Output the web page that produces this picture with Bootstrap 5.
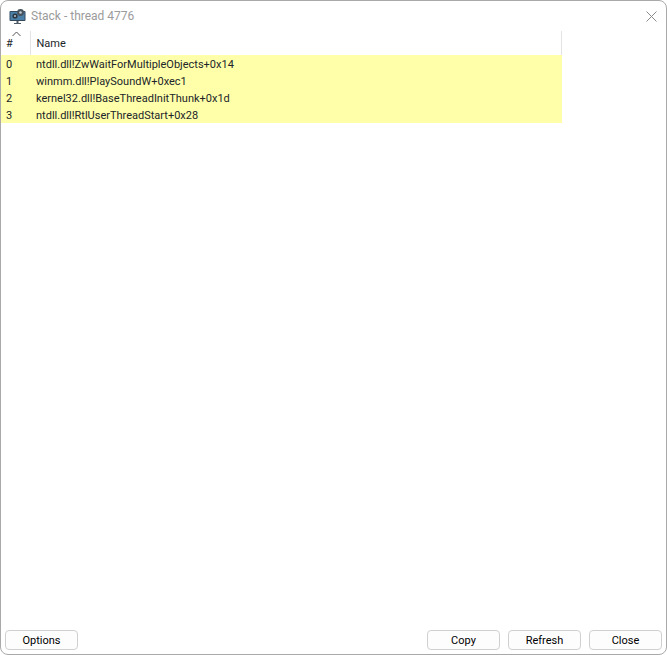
<!DOCTYPE html>
<html lang="en">
<head>
<meta charset="utf-8">
<title>Stack - thread 4776</title>
<link href="https://cdn.jsdelivr.net/npm/bootstrap@5.3.0/dist/css/bootstrap.min.css" rel="stylesheet">
<style>
html,body{height:100%;margin:0;background:#fff}
body{font-family:Roboto,"Open Sans",sans-serif;font-size:11px;color:#000;overflow:hidden}
.win-frame{width:667px;height:655px;border:1px solid #a9a9a9;border-radius:8px;background:#fff;overflow:hidden}
.title-row{height:30px;padding:0 9px 0 8px;flex:none}
.title-text{font-size:12px;color:#9b9b9b;margin-left:5px}
.stack-area{width:561px}
.stack-tbl{width:100%;table-layout:fixed;margin:0;border-collapse:collapse;font-size:11px}
.stack-tbl th{height:24px;padding:0 0 4px 5px;font-weight:400;vertical-align:bottom;border:0;position:relative;background:#fff;line-height:14px}
.stack-tbl th+th{border-left:1px solid #e3e3e3}
.stack-tbl th:last-child{border-right:1px solid #e3e3e3}
.stack-tbl td{height:17px;padding:2px 0 0 5px;line-height:15px;background:#ffffaa;border:0;white-space:nowrap}
.stack-tbl td+td,.stack-tbl th+th{padding-left:6px}
.col-idx{width:29px}
.sort-mark{position:absolute;left:11px;top:0}
.foot-row{padding:0 4px 4px 4px;margin-top:auto}
.dlg-btn{width:73px;height:20px;padding:1px 0 0;font-size:11px;line-height:17px;color:#000;background:#fdfdfd;border:1px solid #d0d0d0;border-radius:4px}
</style>
</head>
<body>
<div class="win-frame d-flex flex-column">
  <div class="title-row d-flex align-items-center">
    <svg width="17" height="17" viewBox="0 0 17 17" aria-hidden="true">
      <rect x="0.5" y="3" width="16" height="10" rx="1" fill="#34495e"/>
      <rect x="1.5" y="4" width="14" height="8" fill="#4a7fa8"/>
      <circle cx="6" cy="8" r="2.6" fill="#2c3640"/>
      <circle cx="6" cy="8" r="1" fill="#b8c4ce"/>
      <circle cx="11.500" cy="4.500" r="3.400" fill="#47525c"/>
      <circle cx="11.500" cy="4.500" r="1.300" fill="#c3ccd4"/>
      <rect x="7.500" y="13" width="2" height="2" fill="#4f5b66"/>
      <rect x="5" y="15" width="7" height="1" fill="#4f5b66"/>
    </svg>
    <span class="title-text">Stack - thread 4776</span>
    <svg class="ms-auto" width="11" height="11" viewBox="0 0 11 11" aria-label="Close">
      <path d="M.5.5l10 10M10.500.5l-10 10" stroke="#8a8a8a" stroke-width="1" fill="none"/>
    </svg>
  </div>
  <div class="stack-area">
    <table class="table stack-tbl">
      <thead>
        <tr>
          <th class="col-idx">
            <svg class="sort-mark" width="9" height="6" viewBox="0 0 9 6" aria-hidden="true"><path d="M.5 5L4.500 1 8.500 5" stroke="#555" fill="none"/></svg>
            #
          </th>
          <th>Name</th>
        </tr>
      </thead>
      <tbody>
        <tr><td>0</td><td>ntdll.dll!ZwWaitForMultipleObjects+0x14</td></tr>
        <tr><td>1</td><td>winmm.dll!PlaySoundW+0xec1</td></tr>
        <tr><td>2</td><td>kernel32.dll!BaseThreadInitThunk+0x1d</td></tr>
        <tr><td>3</td><td>ntdll.dll!RtlUserThreadStart+0x28</td></tr>
      </tbody>
    </table>
  </div>
  <div class="foot-row d-flex">
    <button type="button" class="btn dlg-btn">Options</button>
    <div class="ms-auto d-flex gap-2">
      <button type="button" class="btn dlg-btn">Copy</button>
      <button type="button" class="btn dlg-btn">Refresh</button>
      <button type="button" class="btn dlg-btn">Close</button>
    </div>
  </div>
</div>
<script src="https://cdn.jsdelivr.net/npm/bootstrap@5.3.0/dist/js/bootstrap.bundle.min.js"></script>
</body>
</html>
